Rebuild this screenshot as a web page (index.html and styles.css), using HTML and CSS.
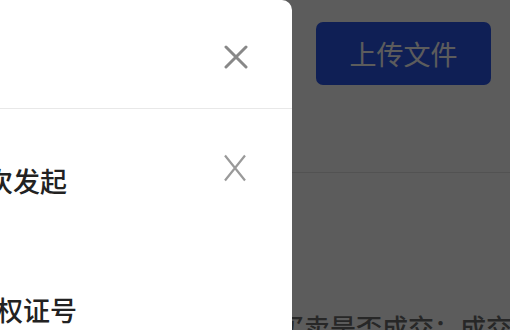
FILE: index.html
```html
<!DOCTYPE html>
<html lang="zh-CN">
<head>
<meta charset="utf-8">
<link rel="stylesheet" href="styles.css">
</head>
<body>
<div class="page">
  <header class="page-head">
    <button class="upload-btn">上传文件</button>
  </header>
  <div class="page-body">
    <p class="deal-line">买卖是否成交：成交</p>
  </div>
</div>
<div class="overlay"></div>
<aside class="drawer">
  <div class="drawer-head">
    <svg class="close-icon" width="24" height="24" viewBox="0 0 24 24">
      <path d="M2 2L22 22M22 2L2 22" stroke="#888" stroke-width="3" stroke-linecap="round" fill="none"/>
    </svg>
  </div>
  <div class="drawer-body">
    <div class="row row-first">
      <span class="label label-a">首次发起</span>
      <svg class="clear-icon" width="24" height="28" viewBox="0 0 24 28">
        <path d="M2 1.5L22 26.5M22 1.5L2 26.5" stroke="#9a9a9a" stroke-width="2.2" fill="none"/>
      </svg>
    </div>
    <div class="row row-second">
      <span class="label label-b">产权证号</span>
    </div>
  </div>
</aside>
</body>
</html>
```

FILE: styles.css
```css
* { box-sizing: border-box; }
html, body {
  margin: 0;
  padding: 0;
  width: 510px;
  height: 330px;
  overflow: hidden;
  font-family: "Noto Sans CJK SC", "Noto Sans", sans-serif;
}
body { position: relative; background: #fff; }

.page { width: 510px; height: 330px; }
.page-head {
  height: 173px;
  border-bottom: 1px solid #e4e4e4;
  display: flex;
  justify-content: flex-end;
  align-items: flex-start;
  padding: 22px 19px 0 0;
}
.upload-btn {
  width: 175px;
  height: 63px;
  border: 0;
  border-radius: 7px;
  background: #2a56ec;
  color: #fff;
  font-family: "Noto Sans CJK SC", sans-serif;
  font-size: 27px;
  padding: 0;
}
.page-body { padding: 139px 0 0 278px; }
.deal-line {
  margin: 0;
  font-size: 26px;
  line-height: 30px;
  font-weight: 500;
  color: #6e6e6e;
  white-space: nowrap;
}

.overlay {
  position: absolute;
  inset: 0;
  background: rgba(0,0,0,0.64);
}

.drawer {
  position: absolute;
  left: 0;
  top: 0;
  width: 292px;
  height: 330px;
  background: #fff;
  border-top-right-radius: 10px;
  overflow: hidden;
}
.drawer-head {
  height: 109px;
  border-bottom: 1px solid #e8e8e8;
  display: flex;
  justify-content: flex-end;
  align-items: flex-start;
  padding: 45px 44px 0 0;
}
.close-icon { display: block; }
.drawer-body { display: flex; flex-direction: column; }
.row {
  display: flex;
  align-items: flex-start;
  justify-content: space-between;
  white-space: nowrap;
}
.row-first { padding-top: 45px; padding-right: 45px; height: 178px; }
.label {
  font-size: 27px;
  line-height: 32px;
  color: #222;
  font-weight: 500;
}
.label-a { margin-left: -41px; margin-top: 11px; }
.label-b { margin-left: -31px; margin-top: 7px; }
.clear-icon { display: block; }
```
